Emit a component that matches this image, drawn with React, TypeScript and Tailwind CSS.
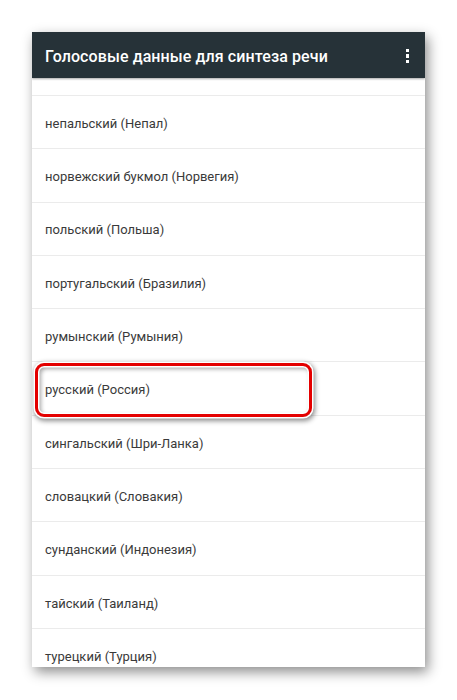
import React from "react"

const languages = [
  "непальский (Непал)",
  "норвежский букмол (Норвегия)",
  "польский (Польша)",
  "португальский (Бразилия)",
  "румынский (Румыния)",
  "русский (Россия)",
  "сингальский (Шри-Ланка)",
  "словацкий (Словакия)",
  "сунданский (Индонезия)",
  "тайский (Таиланд)",
  "турецкий (Турция)",
]

export default function App() {
  return (
    <div className="w-[457px] h-[700px] bg-white pt-[32px] pl-[32px] font-['Roboto',sans-serif]">
      <div className="relative w-[393px] h-[635px] overflow-hidden bg-white shadow-[3px_5px_12px_rgba(0,0,0,0.45)]">
        {/* Toolbar */}
        <header className="relative z-10 flex items-center justify-between h-[46px] bg-[#263238] pl-[13px] pr-[16px] shadow-[0_1px_2px_rgba(0,0,0,0.35)]">
          <h1 className="text-white text-[16px] font-medium tracking-[0.1px] pt-[3px]">
            Голосовые данные для синтеза речи
          </h1>
          <div className="flex flex-col gap-[2px] pt-[2px]">
            <span className="block w-[3.5px] h-[3.5px] bg-white" />
            <span className="block w-[3.5px] h-[3.5px] bg-white" />
            <span className="block w-[3.5px] h-[3.5px] bg-white" />
          </div>
        </header>

        {/* List */}
        <ul>
          <li className="h-[18px] border-b border-[#ebebeb]" />
          {languages.map((name) => (
            <li
              key={name}
              className="relative flex items-center h-[53.3px] border-b border-[#ebebeb] pl-[13px] pt-[3px] text-[13px] text-[#3a3a3a]"
            >
              {name}
              {name === "русский (Россия)" && (
                <div className="absolute left-[3px] top-[1px] w-[277px] h-[54px] rounded-[9px] border-[3px] border-[#e40000] shadow-[0_0_0_1.5px_#ffffff,1px_2px_5px_2px_rgba(0,0,0,0.45),inset_0_0_0_1.5px_#ffffff,inset_2px_2px_4px_1px_rgba(0,0,0,0.35)]" />
              )}
            </li>
          ))}
        </ul>
      </div>
    </div>
  )
}
